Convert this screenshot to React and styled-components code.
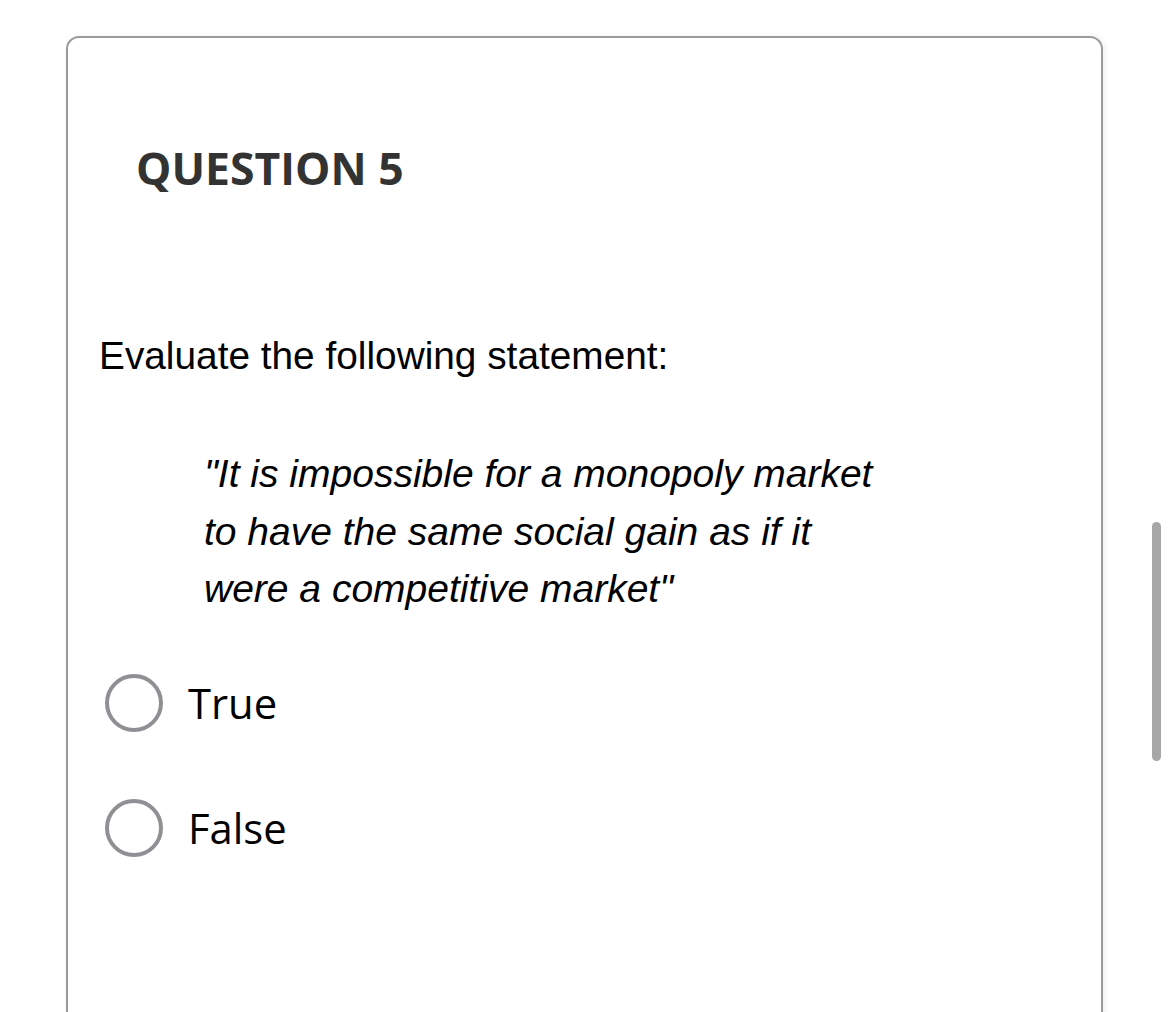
import React from 'react'
import styled, { createGlobalStyle } from 'styled-components'

const GlobalStyle = createGlobalStyle`
  html, body {
    margin: 0;
    padding: 0;
    background: #ffffff;
    overflow: hidden;
  }
  body {
    width: 1170px;
    height: 1012px;
  }
`

const Page = styled.div`
  position: relative;
  height: 1012px;
  padding: 36px 0 0 66px;
  box-sizing: border-box;
`

const Card = styled.div`
  width: 1037px;
  height: 1100px;
  box-sizing: border-box;
  border: 2.5px solid #9a9a9a;
  border-radius: 13px;
  box-shadow: 2px 0 6px rgba(0, 0, 0, 0.06);
  padding: 100px 0 0 31px;
`

const Title = styled.h2`
  margin: 0 0 0 37px;
  font-family: "Open Sans", sans-serif;
  font-weight: 700;
  font-size: 44.5px;
  line-height: 60px;
  color: #333333;
`

const Prompt = styled.p`
  margin: 136px 0 0 0;
  font-family: "Liberation Sans", Arial, sans-serif;
  font-size: 38.8px;
  line-height: 44px;
  color: #000000;
`

const Quote = styled.blockquote`
  margin: 67px 0 0 105px;
  width: 800px;
  font-family: "Liberation Sans", Arial, sans-serif;
  font-style: italic;
  font-size: 39px;
  line-height: 57.5px;
  color: #000000;
`

const Options = styled.div`
  display: flex;
  flex-direction: column;
  gap: 67px;
  margin: 56px 0 0 6px;
`

const Option = styled.label`
  display: flex;
  align-items: center;
  gap: 25px;
  font-family: "Open Sans", sans-serif;
  font-size: 41.8px;
  line-height: 58px;
  color: #000000;
`

const Radio = styled.span`
  width: 58px;
  height: 58px;
  box-sizing: border-box;
  border: 4px solid #909094;
  border-radius: 50%;
  flex: none;
`

const ScrollThumb = styled.div`
  position: absolute;
  left: 1152px;
  top: 522px;
  width: 9px;
  height: 239px;
  border-radius: 5px;
  background: #a6a6a6;
`

export default function App() {
  return (
    <>
      <GlobalStyle />
      <Page>
        <Card>
          <Title>QUESTION 5</Title>
          <Prompt>Evaluate the following statement:</Prompt>
          <Quote>
            "It is impossible for a monopoly market<br />
            to have the same social gain as if it<br />
            were a competitive market"
          </Quote>
          <Options>
            <Option><Radio />True</Option>
            <Option><Radio />False</Option>
          </Options>
        </Card>
        <ScrollThumb />
      </Page>
    </>
  )
}
